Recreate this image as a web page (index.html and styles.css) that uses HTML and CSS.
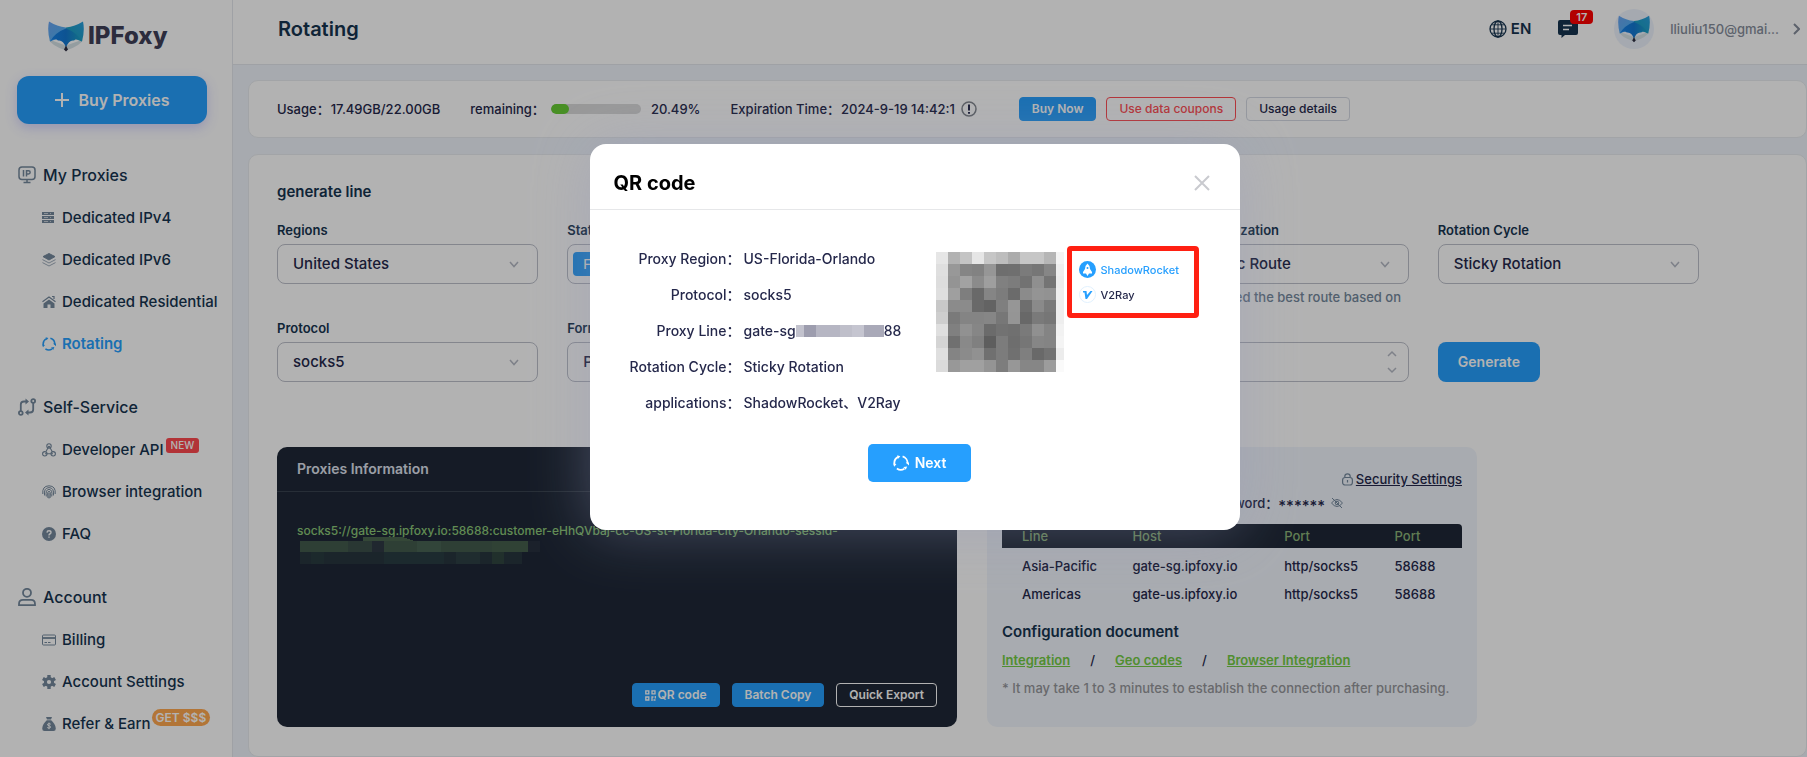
FILE: index.html
```
<!DOCTYPE html>
<html lang="en">
<head>
    <meta charset="UTF-8">
    <meta name="viewport" content="width=device-width, initial-scale=1.0">
    <title>IPFoxy - Rotating</title>
    <link rel="stylesheet" href="styles.css">
</head>
<body>

    <!-- Shared shapes -->
    <svg class="defs" aria-hidden="true">
        <defs>
            <linearGradient id="earLeft" x1="0" y1="0" x2="1" y2="1">
                <stop offset="0" stop-color="#6ba4f2"/><stop offset="1" stop-color="#4bb4f5"/>
            </linearGradient>
            <linearGradient id="earRight" x1="1" y1="0" x2="0" y2="1">
                <stop offset="0" stop-color="#2a9fe0"/><stop offset="1" stop-color="#159fb5"/>
            </linearGradient>
            <linearGradient id="canopy" x1="0" y1="0" x2="1" y2="0">
                <stop offset="0" stop-color="#1681e8"/><stop offset="0.5" stop-color="#1478d2"/><stop offset="1" stop-color="#1ba3c2"/>
            </linearGradient>
        </defs>
        <symbol id="fox" viewBox="0 0 36 30">
            <path d="M1 18 L18 24 L35 18 Q33 24 18 29 Q3 24 1 18Z" fill="#d5e1e6"/>
            <path d="M1 0 Q9 5 18 6 V14 L2 20 Q-1 9 1 0Z" fill="url(#earLeft)"/>
            <path d="M35 0 Q27 5 18 6 V14 L34 20 Q37 9 35 0Z" fill="url(#earRight)"/>
            <path d="M2 20 Q7 11 18 7 Q29 11 34 20 Q29 16 26 19 Q21 18 18 26 Q15 18 10 19 Q7 16 2 20Z" fill="url(#canopy)"/>
            <path d="M18 24 L20 28 L18 30 L16 28Z" fill="#2e2e42"/>
        </symbol>
        <symbol id="cycle" viewBox="0 0 14 14">
            <g fill="none" stroke="currentColor" stroke-width="1.6">
                <path d="M4.6 1.6 A6 6 0 0 0 1.3 8"/>
                <path d="M3.4 11.8 A6 6 0 0 0 10 12"/>
                <path d="M12.7 7.6 A6 6 0 0 0 8.4 1.3"/>
            </g>
            <path d="M3.6 0.3 L6.4 1 L4.6 3.2Z M0.1 7.4 L3 8 L1 10.2Z M9 10.6 L12.4 10 L11.2 13Z M11.2 6.6H14V9.2Z" fill="currentColor"/>
        </symbol>
    </svg>

    <div class="page">
        <aside class="sidebar">
            <a href="#" class="logo">
                <svg width="36" height="31"><use href="#fox"/></svg>
                <span>IPFoxy</span>
            </a>
            <button class="buy-proxies" type="button">
                <svg width="16" height="16" viewBox="0 0 16 16" stroke="currentColor" stroke-width="2"><path d="M8 1V15M1 8H15"/></svg>
                Buy Proxies
            </button>

            <nav>
                <h2 class="nav-title">
                    <svg width="18" height="18" viewBox="0 0 18 18" fill="none" stroke="currentColor" stroke-width="1.5"><rect x="1" y="1" width="16" height="12.5" rx="3"/><path d="M9 13.5V16M5.5 16.5H12.5M5.5 4V10.5M8.5 10.5V4.7H10.5A1.6 1.6 0 0 1 10.5 8H8.5"/></svg>
                    My Proxies
                </h2>
                <ul>
                    <li><a href="#">
                        <svg width="14" height="14" viewBox="0 0 14 14" fill="currentColor"><rect y="1" width="12" height="3"/><rect y="5" width="12" height="3"/><rect y="9" width="12" height="3"/><path d="M2 2.5H6M8 2.5H9M2 6.5H6M8 6.5H9M2 10.5H6M8 10.5H9" stroke="#fff" stroke-width="0.6"/></svg>
                        Dedicated IPv4</a></li>
                    <li><a href="#">
                        <svg width="14" height="14" viewBox="0 0 14 14" fill="none" stroke="currentColor"><path d="M7 0.5L13 3.6L7 7L1 3.6Z" fill="currentColor"/><path d="M0.5 6.6L7 10L13.5 6.6M0.5 9.6L7 13L13.5 9.6" opacity="0.7"/></svg>
                        Dedicated IPv6</a></li>
                    <li><a href="#">
                        <svg width="14" height="14" viewBox="0 0 14 14"><path d="M0.5 6.8L7 2L13.5 6.8M10 1.5H12V4" fill="none" stroke="currentColor" stroke-width="1.2"/><path d="M1.5 8.4L7 4.6L12.5 8.4V13H8.5V9.5H5.5V13H1.5Z" fill="currentColor"/></svg>
                        Dedicated Residential</a></li>
                    <li><a href="#" class="active">
                        <svg width="14" height="14"><use href="#cycle"/></svg>
                        Rotating</a></li>
                </ul>

                <h2 class="nav-title">
                    <svg width="18" height="18" viewBox="0 0 18 18" fill="none" stroke="currentColor" stroke-width="1.8"><circle cx="2.8" cy="15" r="1.9"/><circle cx="15.2" cy="3" r="1.9"/><path d="M2.8 13V6.5Q2.8 3.5 6 3.5H8.5M15.2 5V11.5Q15.2 14.5 12 14.5H9.5"/><path d="M7.5 0.5L11 3.5L7.5 6.5ZM10.5 11.5L7 14.5L10.5 17.5Z" fill="currentColor" stroke="none"/></svg>
                    Self-Service
                </h2>
                <ul>
                    <li><a href="#">
                        <svg width="14" height="14" viewBox="0 0 14 14" fill="none" stroke="currentColor" stroke-width="1.1"><circle cx="7" cy="3" r="2.2"/><circle cx="2.8" cy="10.8" r="2.2"/><circle cx="11.2" cy="10.8" r="2.2"/><path d="M7 3L4 8.5M7 3L10.5 9M3 10.8H11"/></svg>
                        Developer API</a><span class="tag-new">NEW</span></li>
                    <li><a href="#">
                        <svg width="14" height="14" viewBox="0 0 14 14" fill="none" stroke="currentColor" stroke-width="1"><path d="M0.8 9Q0 1 7 0.8Q14 1 13.2 9M2.6 10.5Q1.5 2.8 7 2.6Q12.5 2.8 11.4 10.5M4.3 11.5Q3.2 4.6 7 4.4Q10.8 4.6 9.7 11.5M6 13Q5 6.4 7 6.2Q9 6.4 8 13M7 8V13.5"/></svg>
                        Browser integration</a></li>
                    <li><a href="#">
                        <svg width="14" height="14" viewBox="0 0 14 14"><circle cx="7" cy="7" r="7" fill="currentColor"/><path d="M5 5.6Q5.1 3.8 7 3.8Q9 3.8 9 5.4Q9 6.4 7.8 7Q7 7.4 7 8.4M7 9.4V10.8" fill="none" stroke="#fff" stroke-width="1.4"/></svg>
                        FAQ</a></li>
                </ul>

                <h2 class="nav-title">
                    <svg width="18" height="18" viewBox="0 0 18 18" fill="none" stroke="currentColor" stroke-width="1.8"><circle cx="9" cy="4.8" r="4"/><path d="M1 17.1V16Q1 11.8 5 11.8H13Q17 11.8 17 16V17.1Z"/></svg>
                    Account
                </h2>
                <ul>
                    <li><a href="#">
                        <svg width="14" height="14" viewBox="0 0 14 14" fill="none" stroke="currentColor"><rect x="0.5" y="2" width="13" height="10" rx="1"/><path d="M0.5 5H13.5" stroke-width="1.8"/><path d="M2.5 9.5H5M6 9.5H8.5"/></svg>
                        Billing</a></li>
                    <li><a href="#">
                        <svg width="14" height="14" viewBox="0 0 14 14"><circle cx="7" cy="7" r="3.6" fill="none" stroke="currentColor" stroke-width="3"/><path d="M7 0V3M7 11V14M0.9 3.5L3.5 5M10.5 9L13.1 10.5M0.9 10.5L3.5 9M10.5 5L13.1 3.5" stroke="currentColor" stroke-width="3.4"/></svg>
                        Account Settings</a></li>
                    <li><a href="#">
                        <svg width="14" height="14" viewBox="0 0 14 14"><path d="M4 0H10L9 2.5H5ZM4.8 3.3H9.2Q13.8 7.5 13.8 11.5Q13.8 14 11.5 14H2.5Q0.2 14 0.2 11.5Q0.2 7.5 4.8 3.3Z" fill="currentColor"/><path d="M8.8 7.2Q7 6 5.6 7.2Q5 8.3 7 8.8Q9 9.3 8.5 10.5Q7 11.8 5.2 10.5M7 5.6V12.2" fill="none" stroke="#fff" stroke-width="0.9"/></svg>
                        Refer &amp; Earn</a><span class="tag-get">GET $$$</span></li>
                </ul>
            </nav>
        </aside>

        <div class="content">
            <header class="topbar">
                <h1>Rotating</h1>
                <button class="lang" type="button">
                    <svg width="18" height="18" viewBox="0 0 18 18" fill="none" stroke="currentColor" stroke-width="1.3"><circle cx="9" cy="9" r="8"/><ellipse cx="9" cy="9" rx="4" ry="8"/><path d="M1 9H17M9 1V17M2.5 4.8H15.5M2.5 13.2H15.5" stroke-width="0.9"/></svg>
                    EN
                </button>
                <button class="messages" type="button" aria-label="Messages">
                    <svg width="20" height="18" viewBox="0 0 20 18"><path d="M2 0H18Q20 0 20 2V13Q20 15 18 15H7L3.5 18V15H2Q0 15 0 13V2Q0 0 2 0Z" fill="currentColor"/><path d="M5 5.5H14M5 9.5H11" stroke="#fff" stroke-width="1.5"/></svg>
                    <span class="badge">17</span>
                </button>
                <span class="avatar"><svg width="32" height="28"><use href="#fox"/></svg></span>
                <button class="user" type="button">
                    <span>lliuliu150@gmai...</span>
                    <svg width="7" height="12" viewBox="0 0 7 12" fill="none" stroke="currentColor" stroke-width="2"><path d="M1 1L6 6L1 11"/></svg>
                </button>
            </header>

            <main>
                <section class="card usage">
                    <div class="stat">Usage：<span>17.49GB/22.00GB</span></div>
                    <div class="stat">remaining：<div class="bar"><div class="bar-fill" style="width: 20.49%"></div></div>20.49%</div>
                    <div class="stat">Expiration Time：<span>2024-9-19 14:42:1</span>
                        <svg width="16" height="16" viewBox="0 0 16 16"><circle cx="8" cy="8" r="7" fill="none" stroke="#81868d" stroke-width="1.5"/><path d="M8 3.5V9.5M8 11V12.8" stroke="#25284b" stroke-width="2"/></svg>
                    </div>
                    <div class="usage-buttons">
                        <button class="btn primary" type="button">Buy Now</button>
                        <button class="btn danger" type="button">Use data coupons</button>
                        <button class="btn" type="button">Usage details</button>
                    </div>
                </section>

                <section class="card generate">
                    <h2>generate line</h2>
                    <form class="fields">
                        <div class="field">
                            <label for="regions">Regions</label>
                            <select id="regions"><option>United States</option></select>
                        </div>
                        <div class="field">
                            <label for="state">State</label>
                            <button class="tag-box" id="state" type="button"><span>Florida</span></button>
                        </div>
                        <div class="field">
                            <label for="city">City</label>
                            <select id="city"><option>Orlando</option></select>
                        </div>
                        <div class="field">
                            <label for="route">Routing Optimization</label>
                            <select id="route"><option>Auto Public Route</option></select>
                            <p class="hint">System selected the best route based on</p>
                        </div>
                        <div class="field">
                            <label for="cycle-select">Rotation Cycle</label>
                            <select id="cycle-select"><option>Sticky Rotation</option></select>
                        </div>
                        <div class="field">
                            <label for="protocol">Protocol</label>
                            <select id="protocol"><option>socks5</option></select>
                        </div>
                        <div class="field wide">
                            <label for="format">Format</label>
                            <select id="format"><option>Protocol://host:port:user:pass</option></select>
                        </div>
                        <div class="field">
                            <label for="amount">Amount</label>
                            <div class="number-box">
                                <input type="text" id="amount" value="1">
                                <svg width="10" height="24" viewBox="0 0 10 24" fill="none" stroke="currentColor" stroke-width="1.5"><path d="M1 6L5 2L9 6M1 18L5 22L9 18"/></svg>
                            </div>
                        </div>
                        <button class="generate-btn" type="button">Generate</button>
                    </form>

                    <div class="panels">
                        <div class="proxies">
                            <h3>Proxies Information</h3>
                            <div class="proxies-body">
                                <p>socks5://gate-sg.ipfoxy.io:58688:customer-eHhQVbaj-cc-US-st-Florida-city-Orlando-sessid-</p>
                                <svg class="masked" width="245" height="30" viewBox="0 0 245 30" shape-rendering="crispEdges">
                                    <path d="M66 2H105L118 6H66Z" fill="#4b6650"/>
                                    <rect x="3" y="6" width="228" height="11" fill="#435b4d"/>
                                    <rect x="51" y="6" width="36" height="11" fill="#3c4f49"/>
                                    <rect x="75" y="6" width="12" height="11" fill="#2f3844"/>
                                    <rect x="120" y="6" width="24" height="11" fill="#486453"/>
                                    <rect x="195" y="6" width="36" height="11" fill="#465f4d"/>
                                    <rect x="231" y="6" width="12" height="11" fill="#28303e"/>
                                    <rect x="3" y="17" width="222" height="12" fill="#27353e"/>
                                    <rect x="14" y="17" width="13" height="12" fill="#293b40"/>
                                    <rect x="87" y="17" width="60" height="12" fill="#293d42"/>
                                    <rect x="159" y="17" width="24" height="12" fill="#2d4044"/>
                                    <rect x="195" y="17" width="12" height="12" fill="#30453f"/>
                                </svg>
                                <div class="proxies-buttons">
                                    <button class="btn primary" type="button">
                                        <svg width="11" height="11" viewBox="0 0 11 11" fill="none" stroke="currentColor" stroke-width="1.3"><path d="M0.8 0.8H3.8V3.8H0.8ZM7 0.8H10V3.8H7ZM0.8 7H3.8V10H0.8ZM7 11V7H8.5M10.3 6V8.5M8.5 10H10.5"/></svg>QR code</button>
                                    <button class="btn primary" type="button">Batch Copy</button>
                                    <button class="btn ghost" type="button">Quick Export</button>
                                </div>
                            </div>
                        </div>

                        <div class="info">
                            <p class="security">
                                <svg width="11" height="13" viewBox="0 0 11 13" fill="none" stroke="#75899d" stroke-width="1.2"><rect x="0.6" y="4.5" width="9.8" height="7.5" rx="2.5"/><path d="M2.8 4.5V3.5Q2.8 0.8 5.5 0.8Q8.2 0.8 8.2 3.5V4.5M5.5 7V9.5"/></svg>
                                <a href="#">Security Settings</a>
                            </p>
                            <p class="login">
                                <span class="login-user">Username：eHhQVbaj</span>
                                <span>Password：</span><span class="stars">******</span>
                                <svg width="12" height="12" viewBox="0 0 12 12" fill="none" stroke="#75899d"><path d="M0.5 6Q6 -1 11.5 6Q6 13 0.5 6ZM1 1L11 11"/><circle cx="6" cy="6" r="1.8"/></svg>
                            </p>
                            <table>
                                <thead>
                                    <tr><th>Line</th><th>Host</th><th>Port</th><th>Port</th></tr>
                                </thead>
                                <tbody>
                                    <tr><td>Asia-Pacific</td><td>gate-sg.ipfoxy.io</td><td>http/socks5</td><td>58688</td></tr>
                                    <tr><td>Americas</td><td>gate-us.ipfoxy.io</td><td>http/socks5</td><td>58688</td></tr>
                                </tbody>
                            </table>
                            <h3>Configuration document</h3>
                            <p class="docs"><a href="#">Integration</a><span>/</span><a href="#">Geo codes</a><span>/</span><a href="#">Browser Integration</a></p>
                            <p class="note">* It may take 1 to 3 minutes to establish the connection after purchasing.</p>
                        </div>
                    </div>
                </section>
            </main>
        </div>
    </div>

    <div class="overlay">
        <div class="modal" role="dialog" aria-labelledby="modalTitle">
            <div class="modal-head">
                <h2 id="modalTitle">QR code</h2>
                <button class="close" type="button" aria-label="Close">
                    <svg width="16" height="16" viewBox="0 0 16 16" stroke="currentColor" stroke-width="2"><path d="M1 1L15 15M15 1L1 15"/></svg>
                </button>
            </div>
            <div class="modal-body">
                <dl>
                    <dt>Proxy Region：</dt><dd>US-Florida-Orlando</dd>
                    <dt>Protocol：</dt><dd>socks5</dd>
                    <dt>Proxy Line：</dt>
                    <dd>gate-sg<svg class="mask" width="88" height="12" viewBox="0 0 88 12" shape-rendering="crispEdges"><rect width="88" height="12" fill="#b6b6c3"/><rect width="8" height="12" fill="#c2c2cd"/><rect x="8" width="12" height="12" fill="#9d9dae"/><rect x="44" width="12" height="12" fill="#bfbfca"/><rect x="56" width="12" height="12" fill="#c5c5d0"/><rect x="68" width="20" height="12" fill="#a9a9b8"/></svg>88</dd>
                    <dt>Rotation Cycle：</dt><dd>Sticky Rotation</dd>
                    <dt>applications：</dt><dd>ShadowRocket、V2Ray</dd>
                </dl>
                <svg id="qr" class="qr" width="128" height="120" viewBox="0 0 128 120" shape-rendering="crispEdges"></svg>
                <ul class="apps">
                    <li class="selected">
                        <svg width="17" height="17" viewBox="0 0 17 17"><circle cx="8.5" cy="8.5" r="8.5" fill="#269ffe"/><path d="M8.5 2.5Q11 4.5 11 8L13 11V12.5H10L8.5 15L7 12.5H4V11L6 8Q6 4.5 8.5 2.5Z" fill="#fff"/><circle cx="8.5" cy="7" r="1" fill="#269ffe"/></svg>
                        ShadowRocket
                    </li>
                    <li>
                        <svg width="17" height="17" viewBox="0 0 17 17"><circle cx="8.5" cy="8.5" r="8" fill="#fff" stroke="#e1f1fe"/><path d="M4 5H7.5L8 9L11.5 5H13.5L8 13H6.5L5.5 6.5H4Z" fill="#269ffe"/></svg>
                        V2Ray
                    </li>
                </ul>
            </div>
            <div class="modal-foot">
                <button class="next" type="button"><svg width="16" height="16"><use href="#cycle"/></svg>Next</button>
            </div>
        </div>
    </div>

    <script>
        // Grey level of each code block, two hex digits per block
        const rows = [
            'e6b2c4e6c6bdacc6c6b6f4',
            'df988582966e6f7b7686ee',
            'dd94a28b9e807c728f74ec',
            'df9f7e69857c6b8b9492ee',
            'c88b8b69637f966e8a7aee',
            'ce7a8484867795687a76ee',
            'df8091866b72707a9084f2',
            'd47089805e7c6e768684f4',
            'df848b91707c707f6972ec',
            'db98a0a0947d9786869cfa'
        ];
        const qr = document.getElementById('qr');
        rows.forEach((row, y) => {
            for (let x = 0; x < row.length / 2; x++) {
                const rect = document.createElementNS('http://www.w3.org/2000/svg', 'rect');
                const level = row.slice(x * 2, x * 2 + 2);
                rect.setAttribute('x', x * 12);
                rect.setAttribute('y', y * 12);
                rect.setAttribute('width', 12);
                rect.setAttribute('height', 12);
                rect.setAttribute('fill', '#' + level + level + level);
                qr.appendChild(rect);
            }
        });
    </script>

</body>
</html>
```
FILE: styles.css
```
* {
    box-sizing: border-box;
}
body {
    margin: 0;
    font-family: Inter, "Noto Sans CJK SC", sans-serif;
    font-size: 13px;
    font-weight: 500;
    line-height: 20px;
    color: #25284b;
    background-color: #eff4fb;
}
h1, h2, h3, p, ul, dl, dd {
    margin: 0;
    padding: 0;
}
ul {
    list-style: none;
}
button, input, select {
    font: inherit;
    color: inherit;
}
button {
    border: none;
    background: none;
    padding: 0;
    cursor: pointer;
}
svg {
    flex: none;
}
.defs {
    position: absolute;
    width: 0;
    height: 0;
}
.page {
    display: flex;
    min-height: 100vh;
    overflow: hidden;
}

/* Sidebar */
.sidebar {
    flex: none;
    width: 233px;
    padding: 20px 16px 0 17px;
    background-color: #fff;
    border-right: 1px solid #e4e7ec;
}
.logo {
    display: flex;
    align-items: center;
    gap: 4px;
    height: 32px;
    margin: 0 0 24px 31px;
    color: #3f3f58;
    font-size: 24px;
    font-weight: 800;
    text-decoration: none;
}
.buy-proxies {
    display: flex;
    align-items: center;
    justify-content: center;
    gap: 8px;
    width: 190px;
    height: 48px;
    border-radius: 12px;
    background-color: #269ffe;
    color: #fff;
    font-size: 16px;
    font-weight: 600;
    box-shadow: 0 4px 12px rgba(90, 90, 255, 0.25);
}
.sidebar nav {
    padding-top: 9px;
}
.nav-title {
    display: flex;
    align-items: center;
    gap: 7px;
    margin: 30px 0 10px;
    padding-left: 1px;
    font-size: 16px;
    font-weight: 500;
    line-height: 24px;
    color: #163450;
}
.nav-title svg, .sidebar li svg {
    color: #75899d;
}
.sidebar li {
    display: flex;
    height: 42px;
    align-items: center;
    padding-left: 25px;
    white-space: nowrap;
}
.sidebar li a {
    display: flex;
    align-items: center;
    gap: 6px;
    font-size: 15px;
    color: #163450;
    text-decoration: none;
}
.sidebar li .active, .sidebar li .active svg {
    color: #269ffe;
    font-weight: 600;
}
.tag-new, .tag-get {
    align-self: flex-start;
    color: #fff;
}
.tag-new {
    position: relative;
    margin: 9px 0 0 2px;
    padding: 0 5px;
    border-radius: 3px;
    background-color: #ff4a50;
    font-size: 10px;
    line-height: 15px;
}
.tag-new::before {
    content: "";
    position: absolute;
    left: -3px;
    bottom: 3px;
    border: 4px solid transparent;
    border-right-color: #ff4a50;
}
.tag-get {
    margin: 6px 0 0 1px;
    padding: 0 4px;
    border-radius: 9px;
    background-color: #ffa850;
    font-size: 12px;
    font-weight: 600;
    line-height: 17px;
}

/* Top bar */
.content {
    flex: 1;
    min-width: 0;
    display: flex;
    flex-direction: column;
}
.topbar {
    display: flex;
    align-items: center;
    height: 65px;
    padding: 0 7px 7px 45px;
    background-color: #fff;
    border-bottom: 1px solid #e4e7ec;
    color: #163450;
}
.topbar h1 {
    margin-right: auto;
    font-size: 20px;
    font-weight: 600;
}
.lang {
    display: flex;
    align-items: center;
    gap: 4px;
    margin-right: 27px;
    font-size: 15px;
    font-weight: 600;
}
.messages {
    position: relative;
    display: flex;
    margin-right: 36px;
}
.badge {
    position: absolute;
    top: -10px;
    left: 12px;
    width: 23px;
    border-radius: 4px;
    background-color: #ff0000;
    color: #fff;
    font-size: 11px;
    line-height: 14px;
    font-weight: 600;
}
.avatar {
    display: flex;
    align-items: center;
    justify-content: center;
    width: 40px;
    height: 40px;
    margin-right: 16px;
    border-radius: 50%;
    background-color: #edf3fd;
}
.user {
    display: flex;
    align-items: center;
    gap: 14px;
    color: #868d9b;
}

/* Cards */
main {
    flex: 1;
    display: flex;
    flex-direction: column;
    gap: 16px;
    padding: 15px 0 0 15px;
}
.card {
    background-color: #fff;
    border: 1px solid #e8ebef;
    border-radius: 10px;
}
.usage {
    display: flex;
    align-items: center;
    gap: 30px;
    height: 58px;
    padding: 0 28px;
    white-space: nowrap;
}
.stat {
    display: flex;
    align-items: center;
}
.stat span {
    margin-left: 1px;
}
.stat svg {
    margin-left: 6px;
}
.bar {
    width: 90px;
    height: 10px;
    margin: 0 10px 0 6px;
    border-radius: 5px;
    background-color: #dadada;
    overflow: hidden;
}
.bar-fill {
    height: 100%;
    border-radius: 5px;
    background-color: #67cd34;
}
.usage-buttons {
    display: flex;
    gap: 10px;
    margin-left: 12px;
}
.btn {
    display: flex;
    align-items: center;
    gap: 2px;
    height: 24px;
    padding: 0 12px;
    border: 1px solid #d5d9e2;
    border-radius: 4px;
    font-size: 12px;
    white-space: nowrap;
}
.btn.primary {
    border-color: #269ffe;
    background-color: #269ffe;
    color: #fff;
    font-weight: 600;
}
.btn.danger {
    border-color: #ff4a50;
    color: #ff4a50;
}
.btn.ghost {
    border-color: #fff;
    color: #fff;
    font-weight: 600;
}

/* Form */
.generate {
    flex: 1;
    padding: 27px 28px 29px;
}
.generate h2, .info h3 {
    font-size: 15px;
    font-weight: 600;
    color: #163450;
}
.fields {
    display: grid;
    grid-template-columns: repeat(5, 1fr);
    gap: 11px 29px;
    max-width: 1422px;
    margin-top: 18px;
}
.field {
    min-width: 0;
}
.wide {
    grid-column: span 2;
}
.field label {
    display: block;
    margin-bottom: 4px;
    font-weight: 600;
    color: #163450;
}
.field select, .tag-box, .number-box {
    width: 100%;
    height: 40px;
    border: 1px solid #bdc0ca;
    border-radius: 8px;
    background-color: #fff;
}
.field select {
    appearance: none;
    padding: 0 15px;
    font-size: 15px;
    background-image: url("data:image/svg+xml,%3Csvg xmlns='http://www.w3.org/2000/svg' width='10' height='7' fill='none' stroke='%23b5b9c4' stroke-width='1.5'%3E%3Cpath d='M1 1L5 5.5L9 1'/%3E%3C/svg%3E");
    background-repeat: no-repeat;
    background-position: right 18px center;
}
.tag-box {
    display: flex;
    align-items: center;
    padding: 0 5px;
}
.tag-box span {
    padding: 0 10px;
    border-radius: 4px;
    background-color: #269ffe;
    color: #fff;
    line-height: 24px;
}
.number-box {
    display: flex;
    align-items: center;
    padding: 0 11px 0 15px;
    color: #b5b9c4;
}
.number-box input {
    flex: 1;
    min-width: 0;
    border: none;
    outline: none;
    background: none;
    color: #25284b;
    font-size: 15px;
}
.hint {
    margin-top: 3px;
    color: #75899d;
    white-space: nowrap;
}
.generate-btn {
    align-self: end;
    justify-self: start;
    height: 40px;
    padding: 0 20px;
    border-radius: 8px;
    background-color: #269ffe;
    color: #fff;
    font-size: 14px;
    font-weight: 600;
}

/* Result panels */
.panels {
    display: grid;
    grid-template-columns: 680fr 490fr;
    gap: 30px;
    max-width: 1200px;
    margin-top: 65px;
}
.proxies {
    min-width: 0;
    display: flex;
    flex-direction: column;
    border-radius: 10px;
    background-color: #1f2837;
}
.proxies h3 {
    height: 45px;
    padding: 0 20px;
    border-bottom: 1px solid #39434f;
    color: #dfe2ee;
    font-size: 14px;
    font-weight: 600;
    line-height: 44px;
}
.proxies-body {
    flex: 1;
    display: flex;
    flex-direction: column;
    padding: 29px 20px 20px;
}
.proxies-body p {
    color: #8cc878;
    font-size: 12px;
    white-space: nowrap;
}
.masked {
    margin-top: -6px;
}
.proxies-buttons {
    display: flex;
    justify-content: flex-end;
    gap: 12px;
    margin-top: auto;
}
.info {
    min-width: 0;
    padding: 22px 15px 29px;
    border-radius: 10px;
    background-color: #f1f5fc;
}
.security {
    display: flex;
    align-items: center;
    justify-content: flex-end;
    gap: 3px;
}
.security a {
    color: #25284b;
}
.login {
    display: flex;
    align-items: center;
    margin: 4px 0 11px;
    white-space: nowrap;
}
.login-user {
    width: 44%;
}
.stars {
    padding: 5px 6px 0 0;
    font-size: 15px;
    line-height: 15px;
}
.info table {
    width: 100%;
    table-layout: fixed;
    border-collapse: collapse;
    text-align: left;
}
.info th {
    height: 24px;
    padding: 0 0 0 20px;
    background-color: #1f2837;
    color: #8cb478;
    font-weight: 500;
}
.info th:nth-child(1), .info th:nth-child(3) {
    width: 24%;
}
.info th:nth-child(2) {
    width: 33%;
}
.info th:first-child {
    border-radius: 4px 0 0 0;
}
.info th:last-child {
    border-radius: 0 4px 0 0;
}
.info tbody::before {
    content: "";
    display: block;
    height: 4px;
}
.info td {
    height: 28px;
    padding: 0 0 0 20px;
}
.info h3 {
    margin: 14px 0 8px;
}
.docs {
    display: flex;
    gap: 20px;
    margin-bottom: 8px;
}
.docs a {
    color: #73cc44;
    font-weight: 600;
}
.note {
    color: #96979b;
    white-space: nowrap;
}

/* QR code dialog */
.overlay {
    position: fixed;
    inset: 0;
    display: flex;
    justify-content: center;
    align-items: flex-start;
    padding: 144px 0 0 22px;
    background-color: rgba(0, 0, 0, 0.3);
}
.modal {
    width: 650px;
    border-radius: 16px;
    background-color: #fff;
    box-shadow: 0 0 60px rgba(150, 155, 190, 0.4);
}
.modal-head {
    display: flex;
    align-items: center;
    justify-content: space-between;
    height: 66px;
    padding: 12px 30px 0 24px;
    border-bottom: 1px solid #e6e7e9;
}
.modal-head h2 {
    font-size: 20px;
    font-weight: 700;
    color: #000;
}
.close {
    display: flex;
    color: #c9cacf;
}
.modal-body {
    display: flex;
    align-items: flex-start;
    padding-top: 31px;
}
.modal dl {
    display: grid;
    grid-template-columns: 151px 1fr;
    column-gap: 3px;
    width: 346px;
    font-size: 14px;
    line-height: 36px;
    white-space: nowrap;
}
.modal dt {
    text-align: right;
}
.mask {
    vertical-align: -1px;
}
.qr {
    margin-top: 11px;
}
.apps {
    width: 132px;
    height: 72px;
    margin: 5px 0 0 3px;
    padding: 6px 7px;
    border: 5px solid #ff2012;
    border-radius: 4px;
}
.apps li {
    display: flex;
    align-items: center;
    gap: 5px;
    height: 25px;
    font-size: 11px;
}
.apps .selected {
    color: #269ffe;
}
.modal-foot {
    display: flex;
    justify-content: center;
    padding: 23px 0 48px 10px;
}
.next {
    display: flex;
    align-items: center;
    gap: 6px;
    height: 38px;
    padding: 0 25px;
    border-radius: 5px;
    background-color: #269ffe;
    color: #fff;
    font-size: 14px;
    font-weight: 600;
}
```
